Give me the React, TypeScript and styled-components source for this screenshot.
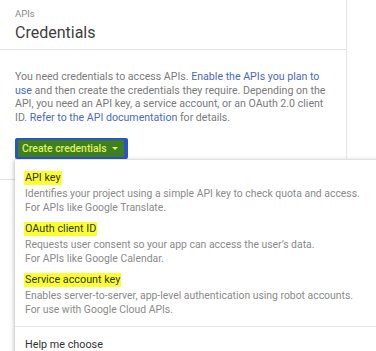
import React from "react";
import styled, { createGlobalStyle } from "styled-components";

const Global = createGlobalStyle`
  html, body { margin: 0; padding: 0; background: #fff; }
  body { font-family: Roboto, "Liberation Sans", Arial, sans-serif; overflow: hidden; }
`;

const Page = styled.div`
  width: 376px;
  height: 351px;
  overflow: hidden;
  background: #fff;
`;

const Column = styled.div`
  width: 346px;
  height: 351px;
  border-right: 1px solid #e6e6e6;
`;

const Header = styled.header`
  height: 50px;
  border-bottom: 1px solid #e3e3e3;
  padding: 8px 15px 0;
  box-sizing: border-box;
  display: flex;
  flex-direction: column;
`;

const Crumb = styled.div`
  font-size: 9.5px;
  color: #8a8a8a;
  line-height: 12px;
`;

const Title = styled.h1`
  margin: 3px 0 0;
  font-size: 16px;
  font-weight: 400;
  color: #404040;
  line-height: 20px;
`;

const Body = styled.div`
  padding: 20px 15px 0;
`;

const Text = styled.p`
  margin: 0;
  font-size: 10.6px;
  line-height: 13.5px;
  color: #7a7a7a;
  width: 315px;
`;

const Link = styled.a`
  color: #4a6ac4;
  text-decoration: none;
`;

const MenuAnchor = styled.div`
  position: relative;
  margin-top: 14px;
  width: 113px;
`;

const Button = styled.button`
  display: flex;
  align-items: stretch;
  height: 21px;
  width: 113px;
  padding: 2px 4px 2px 3px;
  border: 0;
  border-radius: 2px;
  background: #2c55c4;
  box-sizing: border-box;
  cursor: pointer;
  font-family: inherit;
`;

const ButtonInner = styled.span`
  flex: 1;
  display: flex;
  align-items: center;
  justify-content: space-between;
  padding: 0 6px 0 4px;
  background: #3f7f24;
  color: #dff25a;
  font-size: 10.4px;
  font-weight: 500;
  white-space: nowrap;
`;

const Caret = styled.span`
  width: 0;
  height: 0;
  border-left: 3px solid transparent;
  border-right: 3px solid transparent;
  border-top: 3px solid #e6f25a;
`;

const Rule = styled.div`
  margin-top: 20px;
  margin-left: -15px;
  border-top: 1px solid #e3e3e3;
`;

const Menu = styled.div`
  position: absolute;
  top: 100%;
  left: 0;
  width: 380px;
  background: #fff;
  border-top: 1px solid #e2e2e2;
  box-shadow: -1px 1px 4px rgba(0, 0, 0, 0.25);
  padding-top: 11px;
  box-sizing: border-box;
`;

const Item = styled.div`
  padding: 0 10px 8px;
  display: flex;
  flex-direction: column;
  align-items: flex-start;
`;

const ItemTitle = styled.span`
  background: #fbff2e;
  color: #333;
  font-size: 10.8px;
  line-height: 14px;
  padding: 0 1px;
  margin-left: -1px;
  margin-bottom: 2px;
`;

const ItemDesc = styled.div`
  color: #8a8a8a;
  font-size: 10.4px;
  line-height: 13.5px;
`;

const Divider = styled.div`
  border-top: 1px solid #e6e6e6;
  margin-top: 2px;
`;

const Help = styled.div`
  padding: 11px 10px;
  font-size: 10.8px;
  color: #333;
  line-height: 14px;
`;

const items = [
  {
    title: "API key",
    lines: [
      "Identifies your project using a simple API key to check quota and access.",
      "For APIs like Google Translate.",
    ],
  },
  {
    title: "OAuth client ID",
    lines: [
      "Requests user consent so your app can access the user\u2019s data.",
      "For APIs like Google Calendar.",
    ],
  },
  {
    title: "Service account key",
    lines: [
      "Enables server-to-server, app-level authentication using robot accounts.",
      "For use with Google Cloud APIs.",
    ],
  },
];

export default function App() {
  return (
    <Page>
      <Global />
      <Column>
        <Header>
          <Crumb>APIs</Crumb>
          <Title>Credentials</Title>
        </Header>
        <Body>
          <Text>
            You need credentials to access APIs. <Link>Enable the APIs you plan to use</Link> and
            then create the credentials they require. Depending on the API, you need an API key, a
            service account, or an OAuth 2.0 client ID. <Link>Refer to the API documentation</Link>{" "}
            for details.
          </Text>
          <MenuAnchor>
            <Button>
              <ButtonInner>
                Create credentials
                <Caret />
              </ButtonInner>
            </Button>
            <Menu>
              {items.map((it) => (
                <Item key={it.title}>
                  <ItemTitle>{it.title}</ItemTitle>
                  {it.lines.map((l) => (
                    <ItemDesc key={l}>{l}</ItemDesc>
                  ))}
                </Item>
              ))}
              <Divider />
              <Help>Help me choose</Help>
            </Menu>
          </MenuAnchor>
          <Rule />
        </Body>
      </Column>
    </Page>
  );
}
